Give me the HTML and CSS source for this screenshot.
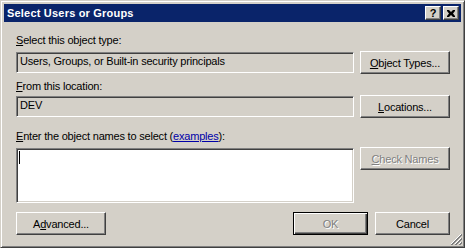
FILE: index.html
```html
<!DOCTYPE html>
<html lang="en">

<head>
  <meta charset="UTF-8">
  <meta name="viewport" content="width=device-width, initial-scale=1.0">
  <title>Select Users or Groups</title>
  <link rel="stylesheet" href="styles.css">
</head>

<body>
  <div class="window">
    <div class="titlebar">
      <span class="title">Select Users or Groups</span>
      <div class="title-buttons">
        <span class="tbtn help">?</span>
        <span class="tbtn close">
          <svg width="8" height="7" viewBox="0 0 8 7">
            <path d="M0 0h2l2 2 2-2h2v1l-2 2.5 2 2.5v1h-2l-2-2-2 2h-2v-1l2-2.5-2-2.5z" fill="#000" />
          </svg>
        </span>
      </div>
    </div>

    <div class="content">
      <div class="label label-first"><u>S</u>elect this object type:</div>
      <div class="row">
        <div class="field">Users, Groups, or Built-in security principals</div>
        <button class="btn"><u>O</u>bject Types...</button>
      </div>

      <div class="label label-second"><u>F</u>rom this location:</div>
      <div class="row">
        <div class="field">DEV</div>
        <button class="btn"><u>L</u>ocations...</button>
      </div>

      <div class="label label-third"><u>E</u>nter the object names to select (<a class="link" href="#">examples</a>):</div>
      <div class="row row-top">
        <div class="names"><span class="caret"></span></div>
        <button class="btn disabled"><u>C</u>heck Names</button>
      </div>

      <div class="footer">
        <button class="btn">A<u>d</u>vanced...</button>
        <div class="actions">
          <button class="btn btn-small default disabled">OK</button>
          <button class="btn btn-small">Cancel</button>
        </div>
      </div>
    </div>

    <svg class="grip" width="12" height="12" viewBox="0 0 12 12">
      <path d="M11 1L1 11M11 5L5 11M11 9L9 11" stroke="#fff" stroke-width="1" />
      <path d="M12 1L1 12M12 2L2 12M12 5L5 12M12 6L6 12M12 9L9 12M12 10L10 12" stroke="#808080" stroke-width="1" />
    </svg>
  </div>
</body>

</html>
```

FILE: styles.css
```css
* {
  box-sizing: border-box;
}

body {
  margin: 0;
  background: #d4d0c8;
  font-family: "Liberation Sans", Arial, sans-serif;
  font-size: 11px;
  color: #000;
}

.window {
  position: relative;
  width: 465px;
  height: 248px;
  padding: 3px;
  background: #d4d0c8;
  border: 1px solid;
  border-color: #d4d0c8 #404040 #404040 #d4d0c8;
  box-shadow: inset 1px 1px #fff, inset -1px -1px #808080;
}

.titlebar {
  display: flex;
  align-items: center;
  justify-content: space-between;
  height: 18px;
  padding: 0 2px 0 3px;
  background: #0a246a;
  color: #fff;
}

.title {
  font-weight: bold;
  font-size: 11px;
  letter-spacing: 0.2px;
}

.title-buttons {
  display: flex;
  gap: 2px;
}

.tbtn {
  display: flex;
  align-items: center;
  justify-content: center;
  width: 16px;
  height: 14px;
  background: #d4d0c8;
  color: #000;
  border: 1px solid;
  border-color: #fff #404040 #404040 #fff;
  box-shadow: inset -1px -1px #808080;
  font-weight: bold;
  font-size: 11px;
  line-height: 1;
}

.content {
  padding: 0 11px 0 12px;
  letter-spacing: -0.2px;
}

.label {
  height: 13px;
  line-height: 13px;
}

.label-first {
  margin-top: 12px;
  margin-bottom: 4px;
}

.label-second {
  margin-top: 6px;
  margin-bottom: 2px;
}

.label-third {
  margin-top: 12px;
  margin-bottom: 4px;
}

.row {
  display: flex;
  align-items: center;
  gap: 6px;
}

.row-top {
  align-items: flex-start;
}

.field {
  width: 338px;
  height: 21px;
  padding: 0 3px;
  line-height: 17px;
  border: 1px solid;
  border-color: #808080 #fff #fff #808080;
  box-shadow: inset 1px 1px #404040, inset -1px -1px #d4d0c8;
  white-space: nowrap;
}

.names {
  position: relative;
  width: 338px;
  height: 55px;
  margin-top: 1px;
  background: #fff;
  border: 1px solid;
  border-color: #808080 #fff #fff #808080;
  box-shadow: inset 1px 1px #404040, inset -1px -1px #d4d0c8;
}

.caret {
  display: block;
  width: 1px;
  height: 13px;
  margin: 2px 0 0 2px;
  background: #000;
}

.btn {
  width: 90px;
  height: 23px;
  padding: 0;
  background: #d4d0c8;
  font-family: inherit;
  font-size: 11px;
  letter-spacing: -0.2px;
  color: #000;
  border: 1px solid;
  border-color: #fff #404040 #404040 #fff;
  box-shadow: inset -1px -1px #808080;
}

.btn.disabled {
  color: #808080;
  text-shadow: 1px 1px #fff;
}

.btn.default {
  border: 1px solid #000;
  box-shadow: inset 1px 1px #fff, inset -1px -1px #404040, inset -2px -2px #808080;
}

.btn-small {
  width: 75px;
}

.link {
  color: #0000a8;
  text-decoration: underline;
}

.footer {
  display: flex;
  justify-content: space-between;
  margin-top: 9px;
}

.actions {
  display: flex;
  gap: 7px;
}

.grip {
  position: absolute;
  right: 2px;
  bottom: 2px;
}
```
